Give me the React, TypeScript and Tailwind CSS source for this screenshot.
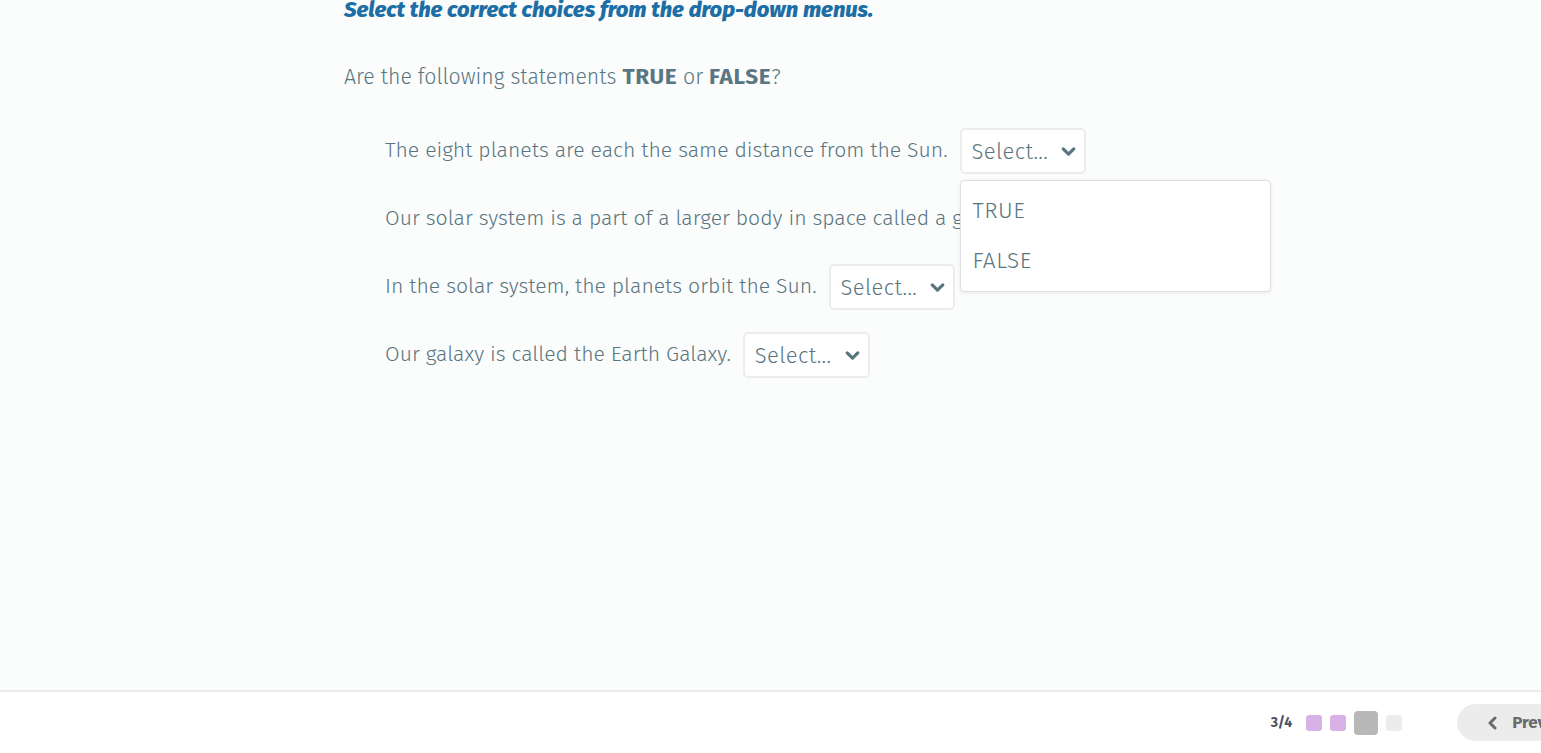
import { useState } from 'react'

const rows = [
  'The eight planets are each the same distance from the Sun.',
  'Our solar system is a part of a larger body in space called a galaxy.',
  'In the solar system, the planets orbit the Sun.',
  'Our galaxy is called the Earth Galaxy.',
]

function Chevron({ className }: { className?: string }) {
  return (
    <svg className={className} viewBox="0 0 16 16" fill="none" stroke="currentColor" strokeWidth="3" strokeLinecap="round" strokeLinejoin="round">
      <path d="M3 5.5l5 5 5-5" />
    </svg>
  )
}

function SelectBox({ open }: { open?: boolean }) {
  return (
    <div className="relative shrink-0">
      <button className="flex items-center h-[46px] pl-[10px] pr-[7px] bg-white border-2 border-[#ececec] rounded-[5px] text-[#587580] text-[22px] tracking-[0.4px] font-light">
        <span>Select...</span>
        <Chevron className="w-[17px] h-[17px] ml-[12px] text-[#587580]" />
      </button>
      {open && (
        <div className="absolute left-0 top-[52px] w-[311px] bg-white border border-[#dedede] rounded-[4px] shadow-[0_1px_4px_rgba(0,0,0,0.08)] py-[5px] z-10">
          {['TRUE', 'FALSE'].map(opt => (
            <div key={opt} className="h-[50px] flex items-center px-[12px] text-[22.5px] tracking-[0.6px] font-light text-[#587580]">
              {opt}
            </div>
          ))}
        </div>
      )}
    </div>
  )
}

export default function App() {
  const [openRow] = useState(0)

  return (
    <div className="w-[1541px] h-[753px] overflow-hidden flex flex-col bg-white font-['Fira_Sans','Open_Sans',sans-serif]">
      {/* Question area */}
      <div className="flex-1 bg-[#fbfcfc] pl-[344px]">
        <div className="mt-[-3px] text-[22px] leading-[26px] font-extrabold italic text-[#1c6ea4]">
          Select the correct choices from the drop-down menus.
        </div>
        <p className="mt-[40px] text-[21.3px] leading-[28px] font-light text-[#587580]">
          Are the following statements{' '}
          <b className="font-bold text-[22.5px] tracking-[0.6px] text-[#5a7681]">TRUE</b> or{' '}
          <b className="font-bold text-[22.5px] tracking-[0.6px] text-[#5a7681]">FALSE</b>?
        </p>

        <div className="mt-[37px] pl-[41px] flex flex-col gap-[22px]">
          {rows.map((text, i) => (
            <div key={i} className="flex items-center gap-[12px]">
              <span className="text-[21.2px] font-light text-[#587580] whitespace-nowrap">{text}</span>
              {i === 1 ? (
                <div className="relative h-[46px]" />
              ) : (
                <SelectBox open={i === openRow} />
              )}
            </div>
          ))}
        </div>
      </div>

      {/* Footer */}
      <div className="h-[63px] shrink-0 border-t-2 border-[#ececec] bg-white flex items-center">
        <div className="ml-auto mr-[-62px] flex items-center">
          <span className="text-[14px] font-bold text-[#4b5363]">3/4</span>
          <div className="flex items-center gap-[8px] ml-[14px]">
            <span className="w-[16px] h-[16px] rounded-[3px] bg-[#d8b2e6]" />
            <span className="w-[16px] h-[16px] rounded-[3px] bg-[#d8b2e6]" />
            <span className="w-[24px] h-[24px] rounded-[4px] bg-[#b8b8b8]" />
            <span className="w-[16px] h-[16px] rounded-[3px] bg-[#ececec]" />
          </div>
          <button className="ml-[55px] h-[37px] pl-[30px] pr-[24px] rounded-full bg-[#ececec] flex items-center text-[17px] font-bold text-[#6b6b6b]">
            <svg className="w-[12px] h-[14px] mr-[13px]" viewBox="0 0 12 14" fill="none" stroke="currentColor" strokeWidth="3" strokeLinecap="round" strokeLinejoin="round">
              <path d="M8 2L3 7l5 5" />
            </svg>
            Previous
          </button>
        </div>
      </div>
    </div>
  )
}
